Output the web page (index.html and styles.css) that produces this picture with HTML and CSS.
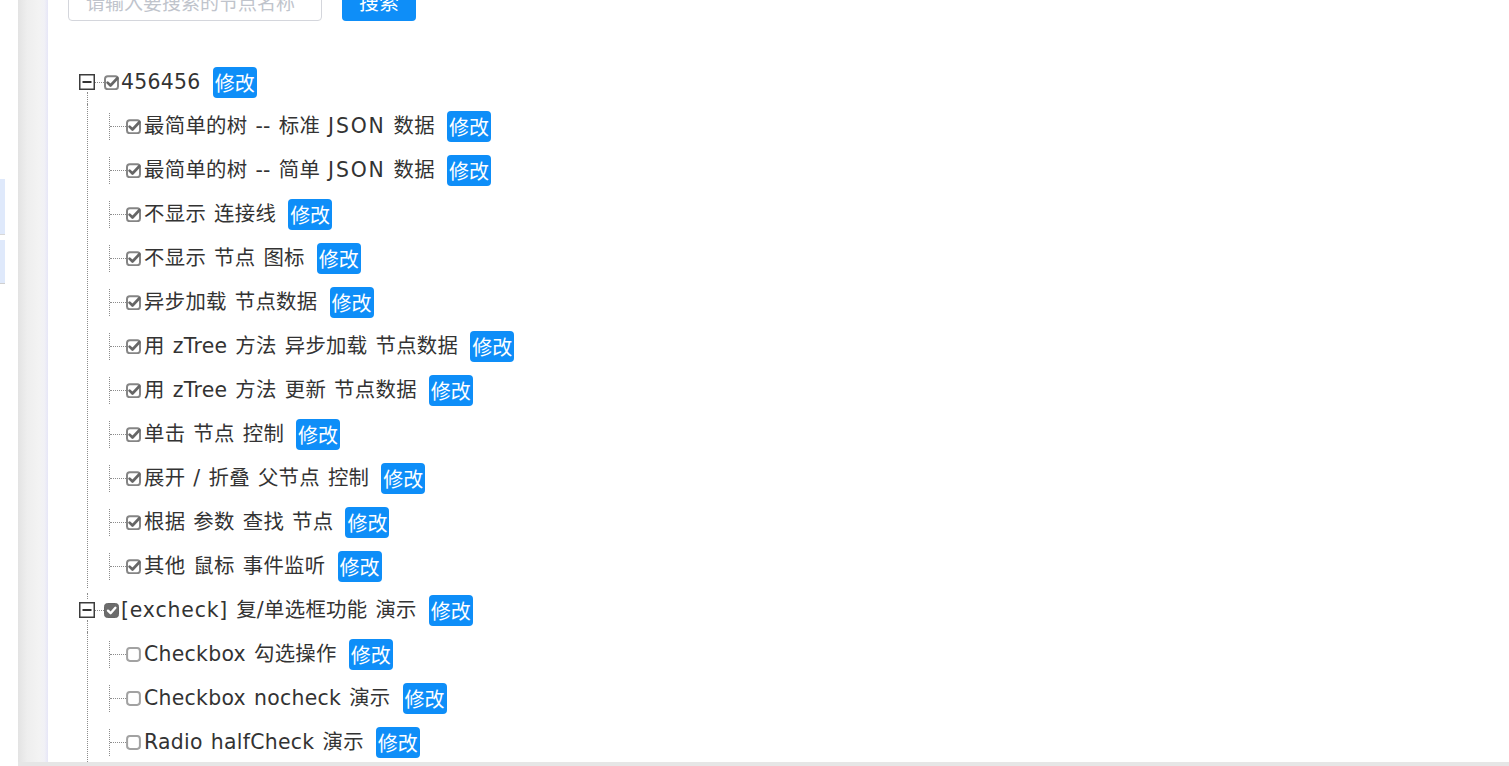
FILE: index.html
```html
<!DOCTYPE html>
<html lang="zh-CN">
<head>
<meta charset="utf-8">
<title>zTree</title>
<link rel="stylesheet" href="styles.css">
</head>
<body>
<svg class="defs" width="0" height="0" aria-hidden="true">
  <defs>
    <symbol id="chk-on" viewBox="0 0 15 15">
      <rect x="1" y="1.2" width="13" height="13" rx="2.8" fill="#fff" stroke="#858585" stroke-width="2"/>
      <path d="M3.6 7.6 L6.5 10.5 L13.3 3.3" fill="none" stroke="#666" stroke-width="2.7" stroke-linecap="round" stroke-linejoin="round"/>
    </symbol>
    <symbol id="chk-full" viewBox="0 0 15 15">
      <rect x="0.5" y="0.5" width="14" height="14" rx="3" fill="#6c6c6c" stroke="#666" stroke-width="1"/>
      <path d="M4 7.7 L6.6 10.2 L11.4 4.8" fill="none" stroke="#fff" stroke-width="2.4" stroke-linecap="round" stroke-linejoin="round"/>
    </symbol>
    <symbol id="chk-off" viewBox="0 0 15 15">
      <rect x="1.1" y="1.1" width="12.8" height="12.8" rx="2.8" fill="#fff" stroke="#a2a2a2" stroke-width="2"/>
    </symbol>
    <symbol id="minus" viewBox="0 0 16 16">
      <rect x="0.75" y="0.75" width="14.5" height="14.5" fill="#fff" stroke="#3c3c3c" stroke-width="1.5"/>
      <path d="M3.5 8 H12.5" stroke="#333" stroke-width="2"/>
    </symbol>
  </defs>
</svg>
<div class="page">
  <aside class="side">
    <div class="side-blk b1"></div>
    <div class="side-blk b2"></div>
  </aside>
  <div class="app">
    <div class="app-main">
      <div class="rail"></div>
      <main class="content">
        <form class="search">
          <input class="search-input" type="text" placeholder="请输入要搜索的节点名称">
          <button class="search-btn" type="button">搜索</button>
        </form>

        <ul class="ztree">
          <li class="root">
            <div class="row">
              <span class="switch first"><svg width="16" height="16"><use href="#minus"/></svg></span>
              <span class="hline"></span>
              <svg class="chk" width="15" height="15"><use href="#chk-on"/></svg>
              <span class="name">456456</span>
              <button class="edit" type="button">修改</button>
            </div>
            <ul class="children">
              <li class="row"><span class="docu"><i></i></span><svg class="chk" width="15" height="15"><use href="#chk-on"/></svg><span class="name">最简单的树 -- 标准 <span class="wide">JSON</span> 数据</span><button class="edit" type="button">修改</button></li>
              <li class="row"><span class="docu"><i></i></span><svg class="chk" width="15" height="15"><use href="#chk-on"/></svg><span class="name">最简单的树 -- 简单 <span class="wide">JSON</span> 数据</span><button class="edit" type="button">修改</button></li>
              <li class="row"><span class="docu"><i></i></span><svg class="chk" width="15" height="15"><use href="#chk-on"/></svg><span class="name">不显示 连接线</span><button class="edit" type="button">修改</button></li>
              <li class="row"><span class="docu"><i></i></span><svg class="chk" width="15" height="15"><use href="#chk-on"/></svg><span class="name">不显示 节点 图标</span><button class="edit" type="button">修改</button></li>
              <li class="row"><span class="docu"><i></i></span><svg class="chk" width="15" height="15"><use href="#chk-on"/></svg><span class="name">异步加载 节点数据</span><button class="edit" type="button">修改</button></li>
              <li class="row"><span class="docu"><i></i></span><svg class="chk" width="15" height="15"><use href="#chk-on"/></svg><span class="name">用 zTree 方法 异步加载 节点数据</span><button class="edit" type="button">修改</button></li>
              <li class="row"><span class="docu"><i></i></span><svg class="chk" width="15" height="15"><use href="#chk-on"/></svg><span class="name">用 zTree 方法 更新 节点数据</span><button class="edit" type="button">修改</button></li>
              <li class="row"><span class="docu"><i></i></span><svg class="chk" width="15" height="15"><use href="#chk-on"/></svg><span class="name">单击 节点 控制</span><button class="edit" type="button">修改</button></li>
              <li class="row"><span class="docu"><i></i></span><svg class="chk" width="15" height="15"><use href="#chk-on"/></svg><span class="name">展开 / 折叠 父节点 控制</span><button class="edit" type="button">修改</button></li>
              <li class="row"><span class="docu"><i></i></span><svg class="chk" width="15" height="15"><use href="#chk-on"/></svg><span class="name">根据 参数 查找 节点</span><button class="edit" type="button">修改</button></li>
              <li class="row"><span class="docu"><i></i></span><svg class="chk" width="15" height="15"><use href="#chk-on"/></svg><span class="name">其他 鼠标 事件监听</span><button class="edit" type="button">修改</button></li>
            </ul>
          </li>
          <li class="root">
            <div class="row">
              <span class="switch center"><svg width="16" height="16"><use href="#minus"/></svg></span>
              <span class="hline"></span>
              <svg class="chk" width="15" height="15"><use href="#chk-full"/></svg>
              <span class="name"><span class="mid">[excheck]</span> 复/单选框功能 演示</span>
              <button class="edit" type="button">修改</button>
            </div>
            <ul class="children">
              <li class="row"><span class="docu"><i></i></span><svg class="chk" width="15" height="15"><use href="#chk-off"/></svg><span class="name">Checkbox 勾选操作</span><button class="edit" type="button">修改</button></li>
              <li class="row"><span class="docu"><i></i></span><svg class="chk" width="15" height="15"><use href="#chk-off"/></svg><span class="name">Checkbox nocheck 演示</span><button class="edit" type="button">修改</button></li>
              <li class="row"><span class="docu"><i></i></span><svg class="chk" width="15" height="15"><use href="#chk-off"/></svg><span class="name">Radio halfCheck 演示</span><button class="edit" type="button">修改</button></li>
            </ul>
          </li>
        </ul>
      </main>
    </div>
    <div class="footer-bar"></div>
  </div>
</div>
</body>
</html>
```

FILE: styles.css
```css
html, body {
  margin: 0;
  padding: 0;
  background: #fff;
  overflow: hidden;
}

body {
  font-family: "DejaVu Sans", "Noto Sans CJK SC", sans-serif;
  color: #333;
}

.defs {
  position: absolute;
  width: 0;
  height: 0;
}

.page {
  display: flex;
  height: 766px;
}

.side {
  width: 18px;
  flex: none;
  padding-top: 179px;
  box-sizing: border-box;
}

.side-blk {
  width: 5px;
  background: #dfe9fb;
}

.b1 {
  height: 55px;
  border-bottom: 1px solid #d8d8d8;
}

.b2 {
  margin-top: 5px;
  height: 43px;
  border-bottom: 1px solid #d0d0d0;
}

.app {
  flex: 1;
  min-width: 0;
  display: flex;
  flex-direction: column;
}

.app-main {
  flex: 1;
  min-height: 0;
  display: flex;
}

.rail {
  width: 30px;
  flex: none;
  background: linear-gradient(to right, #e3e3e3 0%, #eeeeee 30%, #f3f3f3 70%, #f1f1f6 88%, #e6e6f7 100%);
}

.content {
  flex: 1;
  min-width: 0;
  overflow: hidden;
  padding-left: 20px;
}

.footer-bar {
  height: 4px;
  flex: none;
  background: #e6e6e6;
}

/* search */
.search {
  display: flex;
  align-items: center;
  gap: 20px;
  height: 40px;
  margin: -19px 0 0 0;
}

.search-input {
  width: 254px;
  height: 40px;
  box-sizing: border-box;
  border: 1px solid #d4d6dc;
  border-radius: 4px;
  padding: 0 17px;
  font-family: "Noto Sans CJK SC", sans-serif;
  font-size: 19px;
  color: #333;
  outline: none;
}

.search-input::placeholder {
  color: #c0c4cc;
}

.search-btn {
  width: 74px;
  height: 40px;
  border: 0;
  border-radius: 4px;
  background: #0e8ef8;
  color: #fff;
  font-family: "Noto Sans CJK SC", sans-serif;
  font-size: 20px;
  padding: 0;
}

/* tree */
.ztree {
  list-style: none;
  margin: 39px 0 0 11px;
  padding: 0;
}

.root {
  margin: 0;
  padding: 0;
}

.row {
  display: flex;
  align-items: center;
  height: 44px;
  white-space: nowrap;
}

.switch {
  position: relative;
  width: 16px;
  height: 16px;
  flex: none;
}

.switch svg {
  display: block;
}

.switch::after {
  content: "";
  position: absolute;
  left: 8px;
  top: 18px;
  height: 12px;
  border-left: 1px dotted #8c8c8c;
}

.switch.center::before {
  content: "";
  position: absolute;
  left: 8px;
  top: -9px;
  height: 6px;
  border-left: 1px dotted #8c8c8c;
}

.hline {
  width: 9px;
  height: 0;
  flex: none;
  border-top: 1px dotted #8c8c8c;
}

.chk {
  flex: none;
  display: block;
}

.name {
  font-size: 20.4px;
  line-height: 1;
  letter-spacing: 0.3px;
  word-spacing: 1.2px;
  color: #333;
  margin-left: 2px;
}

.name .wide {
  letter-spacing: 1.8px;
}

.name .mid {
  letter-spacing: 0.85px;
}

.edit {
  margin-left: 12px;
  height: 31px;
  padding: 0 2px;
  border: 0;
  border-radius: 4px;
  background: #0e8ef8;
  color: #fff;
  font-family: "Noto Sans CJK SC", sans-serif;
  font-size: 20px;
  line-height: 31px;
  flex: none;
}

.children {
  list-style: none;
  margin: 0 0 0 8px;
  padding: 0 0 0 21px;
  border-left: 1px dotted #8c8c8c;
}

.docu {
  width: 16px;
  height: 27px;
  flex: none;
  border-left: 1px dotted #8c8c8c;
  display: flex;
  align-items: center;
}

.docu i {
  display: block;
  width: 16px;
  height: 0;
  border-top: 1px dotted #8c8c8c;
}

.children .name {
  margin-left: 3px;
}
```
